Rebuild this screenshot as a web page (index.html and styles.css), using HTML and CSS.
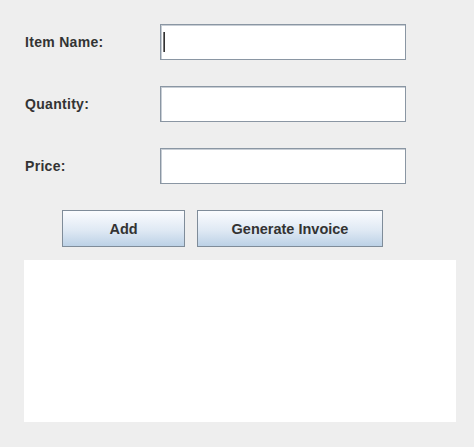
FILE: index.html
```html
<!DOCTYPE html>
<html lang="en">
<head>
    <meta charset="UTF-8">
    <meta name="viewport" content="width=device-width, initial-scale=1.0">
    <title>Invoice</title>
    <link rel="stylesheet" href="styles.css">
</head>
<body>
    <div id="frame">
        <div id="form">
            <label for="item-name">Item Name:</label>
            <div class="field focused"><span class="caret"></span></div>
            <label for="quantity">Quantity:</label>
            <div class="field"></div>
            <label for="price">Price:</label>
            <div class="field"></div>
        </div>
        <div id="buttons">
            <button class="btn btn-add">Add</button>
            <button class="btn btn-invoice">Generate Invoice</button>
        </div>
        <div id="output"></div>
    </div>
</body>
</html>
```

FILE: styles.css
```css
body {
    margin: 0;
    background-color: #eeeeee;
    font-family: "Liberation Sans", Arial, sans-serif;
    color: #333;
}
#frame {
    width: 474px;
    height: 447px;
    box-sizing: border-box;
    padding-top: 24px;
}
#form {
    display: grid;
    grid-template-columns: 135px 246px;
    grid-auto-rows: 36px;
    row-gap: 26px;
    padding-left: 25px;
    align-items: center;
}
#form label {
    font-weight: bold;
    font-size: 14px;
    letter-spacing: 0.3px;
}
.field {
    height: 36px;
    box-sizing: border-box;
    background-color: #fff;
    border: 1px solid #8a96a3;
    box-shadow: inset 1px 1px 0 #c8ced5;
    display: flex;
    align-items: center;
    padding-left: 2px;
}
.caret {
    width: 1px;
    height: 20px;
    background-color: #333;
    border-left: 1px solid #777;
}
#buttons {
    display: flex;
    gap: 12px;
    padding-left: 62px;
    margin-top: 26px;
}
.btn {
    height: 37px;
    border: 1px solid #7f8c99;
    background: linear-gradient(#fbfcfe, #dfe9f4 55%, #bcd1e6);
    font-family: "Liberation Sans", Arial, sans-serif;
    font-weight: bold;
    font-size: 14.5px;
    color: #333;
    padding: 0;
}
.btn-add {
    width: 123px;
}
.btn-invoice {
    width: 186px;
}
#output {
    margin: 13px 0 0 24px;
    width: 432px;
    height: 162px;
    background-color: #fff;
}
```
